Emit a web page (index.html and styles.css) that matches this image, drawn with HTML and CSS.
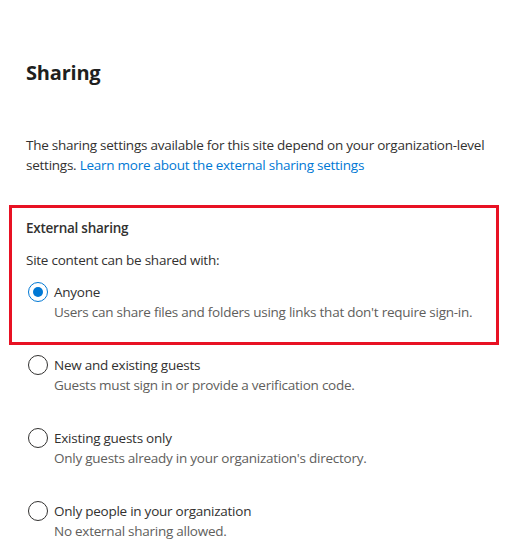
FILE: index.html
```html
<!DOCTYPE html>
<html lang="en">
<head>
<meta charset="utf-8">
<title>Sharing</title>
<link rel="stylesheet" href="styles.css">
</head>
<body>
<main class="page">
  <h1 class="title">Sharing</h1>
  <p class="intro">The sharing settings available for this site depend on your organization-level settings. <a class="link" href="#">Learn more about the external sharing settings</a></p>

  <section class="highlight">
    <h2 class="group-title">External sharing</h2>
    <p class="group-label">Site content can be shared with:</p>
    <div class="option">
      <span class="radio radio-checked"></span>
      <div class="option-text">
        <div class="option-label">Anyone</div>
        <div class="option-desc">Users can share files and folders using links that don't require sign-in.</div>
      </div>
    </div>
  </section>

  <div class="options">
    <div class="option">
      <span class="radio"></span>
      <div class="option-text">
        <div class="option-label">New and existing guests</div>
        <div class="option-desc">Guests must sign in or provide a verification code.</div>
      </div>
    </div>
    <div class="option">
      <span class="radio"></span>
      <div class="option-text">
        <div class="option-label">Existing guests only</div>
        <div class="option-desc">Only guests already in your organization's directory.</div>
      </div>
    </div>
    <div class="option">
      <span class="radio"></span>
      <div class="option-text">
        <div class="option-label">Only people in your organization</div>
        <div class="option-desc">No external sharing allowed.</div>
      </div>
    </div>
  </div>
</main>
</body>
</html>
```

FILE: styles.css
```css
html, body {
  margin: 0;
  padding: 0;
  background: #ffffff;
}

body {
  font-family: "Open Sans", "Noto Sans", sans-serif;
  font-size: 13.5px;
  letter-spacing: -0.25px;
  line-height: 20px;
  color: #323130;
}

.page {
  padding: 59px 26px 0 26px;
}

.title {
  margin: 0;
  font-size: 20px;
  line-height: 28px;
  font-weight: 700;
  letter-spacing: -0.2px;
  color: #201f1e;
}

.intro {
  margin: 48px 0 0 0;
}

.link {
  color: #0078d4;
  text-decoration: none;
}

.highlight {
  margin: 30px 7px 0 -17px;
  padding: 10px 14px 20px 14px;
  border: 3px solid #e81123;
}

.group-title {
  margin: 0;
  font-size: 13.5px;
  line-height: 20px;
  font-weight: 600;
  color: #323130;
}

.group-label {
  margin: 12px 0 12px 0;
}

.options {
  margin-top: 10px;
  display: flex;
  flex-direction: column;
  gap: 33px;
}

.option {
  display: flex;
  align-items: flex-start;
  gap: 6px;
}

.radio {
  box-sizing: border-box;
  flex: 0 0 20px;
  width: 20px;
  height: 20px;
  margin-left: 2px;
  border: 1px solid #323130;
  border-radius: 50%;
  position: relative;
}

.radio-checked {
  border-color: #0078d4;
}

.radio-checked::after {
  content: "";
  position: absolute;
  left: 4px;
  top: 4px;
  width: 10px;
  height: 10px;
  border-radius: 50%;
  background: #0078d4;
}

.option-label {
  color: #323130;
}

.option-desc {
  color: #605e5c;
}
```
